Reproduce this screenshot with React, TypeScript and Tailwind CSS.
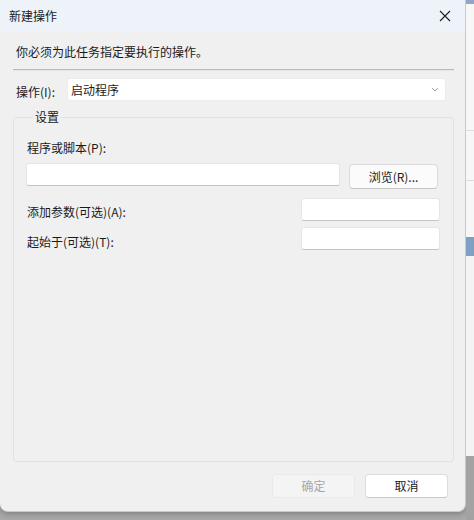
import React from 'react';

const font = { fontFamily: '"Noto Sans CJK SC", "Noto Sans", sans-serif' };

// Win11-style text box: light edges, darker bottom line
const TextBox = ({ className = '' }: { className?: string }) => (
  <div className={`bg-white border border-[#e6e6e6] border-b-[#c4c4c4] rounded-[3px] ${className}`} />
);

const DialogButton = ({ label, disabled }: { label: string; disabled?: boolean }) => (
  <button
    disabled={disabled}
    className={`w-[83px] h-[24px] rounded-[4px] text-[12px] leading-none border ${
      disabled
        ? 'bg-[#f4f4f4] border-[#e9e9e9] text-[#a8a8a8]'
        : 'bg-white border-[#dcdcdc] border-b-[#c8c8c8] text-[#1a1a1a]'
    }`}
  >
    {label}
  </button>
);

export default function App() {
  return (
    <div className="w-[474px] h-[520px] flex bg-[#a9a9a9] overflow-hidden text-[#1a1a1a]" style={font}>
      {/* dialog window */}
      <div className="w-[466px] h-[512px] flex flex-col bg-[#f0f0f0] border-r border-b border-[#c9c9c9] rounded-br-[8px] rounded-bl-[8px] shadow-[0_2px_6px_rgba(0,0,0,0.25)] shrink-0 overflow-hidden">
        {/* title bar */}
        <div className="h-[32px] flex items-center justify-between bg-[#eef3f9] pl-[9px] pr-[12px]">
          <span className="text-[12px] leading-[16px]">新建操作</span>
          <svg width="12" height="12" viewBox="0 0 12 12" className="mr-[2px]">
            <path d="M1 1 L11 11 M11 1 L1 11" stroke="#1f1f1f" strokeWidth="1.1" />
          </svg>
        </div>

        {/* body */}
        <div className="flex-1 flex flex-col pl-[13px] pr-[11px] pt-[12px]">
          <p className="text-[12px] leading-[16px] pl-[3px]">你必须为此任务指定要执行的操作。</p>
          <div className="mt-[9px] h-[2px] bg-[#b9b9b9] border-b border-[#e6e6e6]" />

          <div className="mt-[7px] flex items-center pr-[8px]">
            <span className="w-[54px] pl-[3px] text-[12px] leading-[16px] pt-[4px]">操作(I):</span>
            <div className="flex-1 h-[23px] bg-white border border-[#ececec] rounded-[3px] flex items-center justify-between pl-[3px] pr-[6px]">
              <span className="text-[12px] leading-[16px]">启动程序</span>
              <svg width="8" height="5" viewBox="0 0 8 5">
                <path d="M1 1 L4 4 L7 1" stroke="#9a9a9a" fill="none" strokeWidth="0.9" />
              </svg>
            </div>
          </div>

          {/* settings group */}
          <fieldset className="mt-[8px] h-[353px] border border-[#e2e2e2] rounded-[3px] pl-[12px] pr-[13px] flex flex-col">
            <legend className="ml-[7px] px-[2px] text-[12px] leading-[16px]">设置</legend>

            <span className="mt-[15px] pl-[1px] text-[12px] leading-[16px]">程序或脚本(P):</span>
            <div className="mt-[7px] flex items-start">
              <TextBox className="w-[314px] h-[23px]" />
              <button className="ml-[9px] mt-[1px] w-[89px] h-[25px] bg-[#fbfbfb] border border-[#dadada] border-b-[#c6c6c6] rounded-[4px] text-[12px] leading-none">
                浏览(R)...
              </button>
            </div>

            <div className="mt-[9px] flex items-center justify-between">
              <span className="pl-[1px] pt-[4px] text-[12px] leading-[16px]">添加参数(可选)(A):</span>
              <TextBox className="w-[139px] h-[23px]" />
            </div>
            <div className="mt-[6px] flex items-center justify-between">
              <span className="pl-[1px] pt-[6px] text-[12px] leading-[16px]">起始于(可选)(T):</span>
              <TextBox className="w-[139px] h-[23px]" />
            </div>
          </fieldset>

          <div className="mt-[12px] flex justify-end gap-[10px] pr-[6px]">
            <DialogButton label="确定" disabled />
            <DialogButton label="取消" />
          </div>
        </div>
      </div>

      {/* background window peeking on the right */}
      <div className="flex-1 flex flex-col">
        <div className="h-[4px] bg-[#8fa6c4]" />
        <div className="h-[126px] bg-[#f7f7f7]" />
        <div className="h-[1px] bg-[#dedede]" />
        <div className="h-[49px] bg-[#f7f7f7]" />
        <div className="h-[1px] bg-[#dedede]" />
        <div className="h-[56px] bg-[#f7f7f7]" />
        <div className="h-[19px] bg-[#7f9fc6]" />
        <div className="h-[200px] bg-[#f4f4f4]" />
        <div className="flex-1 bg-[#a3a3a3]" />
      </div>
    </div>
  );
}
